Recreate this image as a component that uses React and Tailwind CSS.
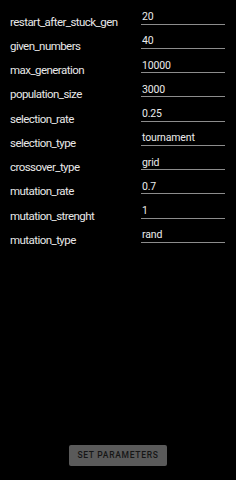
const PARAMS = [
  ['restart_after_stuck_gen', '20'],
  ['given_numbers', '40'],
  ['max_generation', '10000'],
  ['population_size', '3000'],
  ['selection_rate', '0.25'],
  ['selection_type', 'tournament'],
  ['crossover_type', 'grid'],
  ['mutation_rate', '0.7'],
  ['mutation_strenght', '1'],
  ['mutation_type', 'rand'],
];

function ParamRow({ label, value }) {
  return (
    <div className="flex h-[24.28px] items-start">
      <div className="w-[141px] pl-[10px] mt-[15.5px] text-[11.5px] leading-[12px] tracking-[-0.55px] text-[#e8e8e8] whitespace-nowrap">
        {label}
      </div>
      <div className="w-[84px] mt-[11px] pb-[1.5px] border-b border-[#8c8c8c] text-[10.5px] leading-[11px] tracking-[-0.15px] text-[#ececec] pl-[1px]">
        {value}
      </div>
    </div>
  );
}

export default function App() {
  return (
    <div
      className="w-[236px] h-[480px] bg-black flex flex-col"
      style={{ fontFamily: 'Roboto, "Liberation Sans", sans-serif' }}
    >
      {/* Parameter list */}
      <div>
        {PARAMS.map(([label, value]) => (
          <ParamRow key={label} label={label} value={value} />
        ))}
      </div>

      {/* Submit */}
      <div className="mt-auto mb-[14px] flex justify-center">
        <button className="w-[98px] h-[21px] rounded-[2px] bg-[#5a5a5a] text-[#161616] text-[8.5px] font-medium tracking-[0.7px] uppercase flex items-center justify-center">
          Set parameters
        </button>
      </div>
    </div>
  );
}
